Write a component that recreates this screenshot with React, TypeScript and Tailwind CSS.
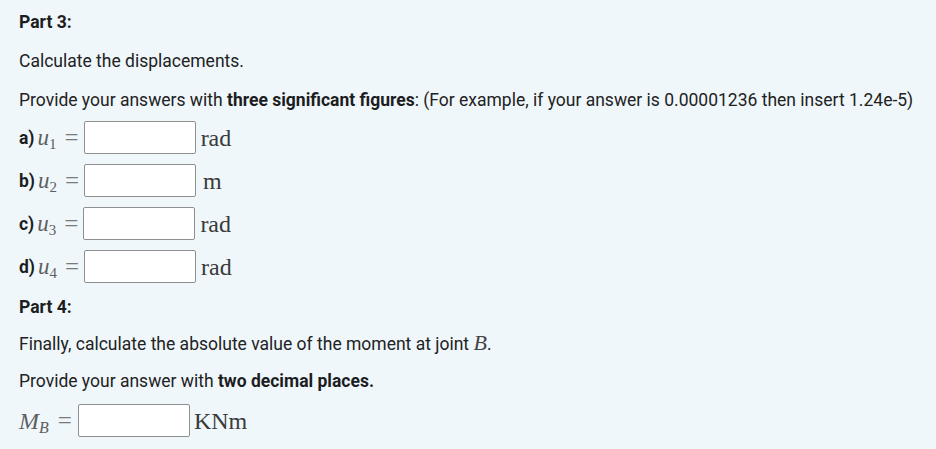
const sans = { fontFamily: "Roboto, 'Liberation Sans', sans-serif" };

function Box() {
  return <div className="h-[33px] w-[112px] shrink-0 rounded-[2px] border border-[#8f8f8f] bg-white" />;
}

function Row({ label, sub, unit, unitGap }: { label: string; sub: string; unit: string; unitGap: string }) {
  return (
    <div className="flex h-[33px] items-center">
      <span className="text-[17.5px] font-bold text-[#1d1d1f]">{label}</span>
      <span className="ml-[3px] font-['Liberation_Serif',serif] text-[23px] leading-none italic text-[#5f5f5f]">
        u<sub className="text-[15px] not-italic">{sub}</sub>
      </span>
      <span className="ml-[8px] mr-[5px] font-['Liberation_Serif',serif] text-[25px] leading-none text-[#7a7a7a]">=</span>
      <Box />
      <span className={`${unitGap} font-['Liberation_Serif',serif] text-[24px] leading-none text-[#3a3a3a]`}>{unit}</span>
    </div>
  );
}

export default function App() {
  return (
    <div className="h-[449px] w-[936px] bg-[#eff7fb] pl-[19px] pt-[10px] text-[17.5px] leading-[24px] text-[#222]" style={sans}>
      <p className="font-bold text-[#1d1d1f]">Part 3:</p>
      <p className="mt-[15px]">Calculate the displacements.</p>
      <p className="mt-[15px]">
        Provide your answers with <b className="text-[#1d1d1f]">three significant figures</b>: (For example, if your answer is
        0.00001236 then insert 1.24e-5)
      </p>
      <div className="mt-[9px] flex flex-col gap-[10px]">
        <Row label="a)" sub="1" unit="rad" unitGap="ml-[5px]" />
        <Row label="b)" sub="2" unit="m" unitGap="ml-[7px]" />
        <Row label="c)" sub="3" unit="rad" unitGap="ml-[5px]" />
        <Row label="d)" sub="4" unit="rad" unitGap="ml-[5px]" />
      </div>
      <p className="mt-[12px] font-bold text-[#1d1d1f]">Part 4:</p>
      <p className="mt-[13px]">
        Finally, calculate the absolute value of the moment at joint{" "}
        <span className="font-['Liberation_Serif',serif] text-[22px] leading-none italic text-[#444]">B</span>.
      </p>
      <p className="mt-[13px]">
        Provide your answer with <b className="text-[#1d1d1f]">two decimal places.</b>
      </p>
      <div className="mt-[11px] flex h-[33px] items-center">
        <span className="font-['Liberation_Serif',serif] text-[24px] leading-none italic text-[#5f5f5f]">
          M<sub className="text-[16px]">B</sub>
        </span>
        <span className="ml-[9px] mr-[6px] font-['Liberation_Serif',serif] text-[25px] leading-none text-[#7a7a7a]">=</span>
        <Box />
        <span className="ml-[4px] font-['Liberation_Serif',serif] text-[24px] leading-none text-[#3a3a3a]">KNm</span>
      </div>
    </div>
  );
}
